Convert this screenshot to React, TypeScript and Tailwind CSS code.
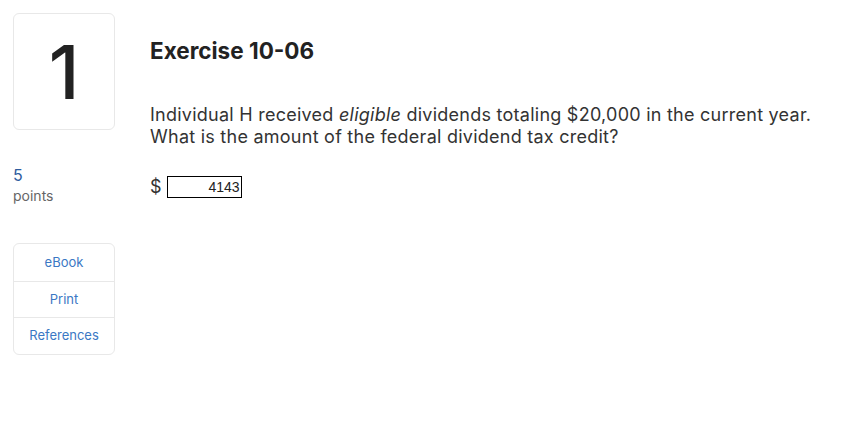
import React from "react";

export default function App() {
  return (
    <div className="w-[854px] h-[422px] bg-white flex font-['Inter',sans-serif]">
      <div className="w-[150px] shrink-0 pl-[13px] pt-[13px] flex flex-col">
        <div className="w-[102px] h-[117px] border border-[#e8e8e8] rounded-[6px] flex items-center justify-center">
          <span className="text-[74px] leading-none text-[#222] font-medium">1</span>
        </div>
        <div className="mt-[35px] text-[16px] leading-[20px] text-[#2d5c9e]">5</div>
        <div className="mt-[1px] text-[14px] leading-[20px] text-[#666]">points</div>
        <div className="mt-[37px] w-[102px] border border-[#e8e8e8] rounded-[6px] flex flex-col text-[13px] text-[#3b78c4]">
          <div className="h-[38px] flex items-center justify-center border-b border-[#e8e8e8]">eBook</div>
          <div className="h-[36px] flex items-center justify-center border-b border-[#e8e8e8]">Print</div>
          <div className="h-[36px] flex items-center justify-center">References</div>
        </div>
      </div>
      <div className="flex-1 pt-[36px] text-[#333]">
        <h1 className="text-[22.5px] leading-[30px] font-bold text-[#222]">Exercise 10-06</h1>
        <p className="mt-[38px] text-[18px] leading-[22px] tracking-[0.25px]">
          Individual H received <em>eligible</em> dividends totaling $20,000 in the current year.
          <br />
          What is the amount of the federal dividend tax credit?
        </p>
        <div className="mt-[25px] flex items-center text-[18px]">
          <span>$</span>
          <div className="ml-[5px] w-[75px] h-[22px] border border-black text-right pr-[1px] text-[14px] leading-[20px] font-['Liberation_Sans',sans-serif] text-[#222]">
            4143
          </div>
        </div>
      </div>
    </div>
  );
}
